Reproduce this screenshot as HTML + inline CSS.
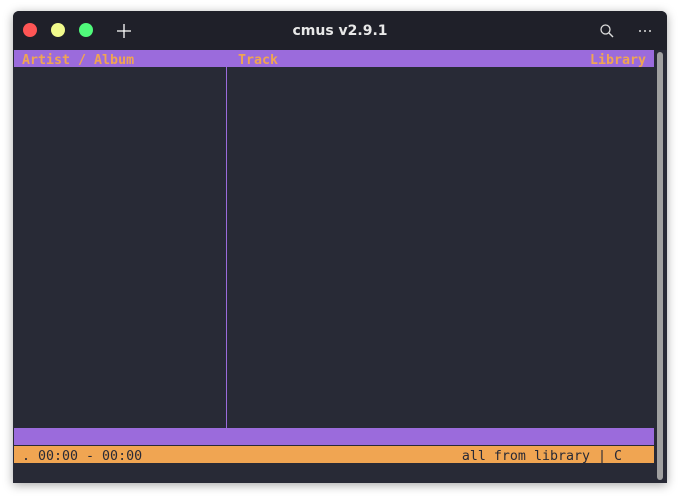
<!DOCTYPE html>
<html><head><style>
body{margin:0;width:680px;height:498px;background:#fff;position:relative;overflow:hidden;font-family:"DejaVu Sans Mono","Liberation Mono",monospace}
.win{position:absolute;left:13px;top:11px;width:654px;height:472px;background:#282a36;border-radius:6px 6px 0 0;box-shadow:0 2px 10px rgba(0,0,0,.35);overflow:hidden}
.tb{position:absolute;left:0;top:0;width:654px;height:39px;background:#1f2029}
.dot{position:absolute;top:12px;width:14px;height:14px;border-radius:50%}
.title{position:absolute;left:0;width:654px;top:12px;text-align:center;color:#e8e8e8;font:bold 14px "DejaVu Sans","Liberation Sans",sans-serif}
.bar{position:absolute;left:1px;width:640px;height:17px;font-size:13.3px;line-height:17px;white-space:pre}
.bar span{top:2px}
</style></head><body>
<div class="win">
<div class="tb">
<div class="dot" style="left:10px;background:#ff5555"></div>
<div class="dot" style="left:38px;background:#f1fa8c"></div>
<div class="dot" style="left:66px;background:#50fa7b"></div>
<svg style="position:absolute;left:104px;top:13px" width="14" height="14"><path d="M7 0V14M0 7H14" stroke="#fff" stroke-width="1.3"/></svg>
<div class="title">cmus v2.9.1</div>
<svg style="position:absolute;left:587px;top:13px" width="14" height="14"><circle cx="5.5" cy="5.5" r="4.5" fill="none" stroke="#ddd" stroke-width="1.3"/><path d="M9 9L13 13" stroke="#ddd" stroke-width="1.4"/></svg>
<svg style="position:absolute;left:625px;top:18px" width="14" height="4"><circle cx="2" cy="2" r="1" fill="#ddd"/><circle cx="7" cy="2" r="1" fill="#ddd"/><circle cx="12" cy="2" r="1" fill="#ddd"/></svg>
</div>
<div class="bar" style="top:39px;background:#9b6bdc;color:#f0a552;font-weight:bold"><span style="position:absolute;left:8px">Artist / Album</span><span style="position:absolute;left:224px">Track</span><span style="position:absolute;right:8px">Library</span></div>
<div style="position:absolute;left:213px;top:56px;width:1px;height:361px;background:#9b6bdc"></div>
<div class="bar" style="top:417px;background:#9b6bdc"></div>
<div class="bar" style="top:435px;background:#f0a552;color:#282a36"><span style="position:absolute;left:8px">. 00:00 - 00:00</span><span style="position:absolute;right:32px">all from library | C</span></div>
<div style="position:absolute;left:644px;top:41px;width:6px;height:428px;background:#a0a0a0;border-radius:3px"></div>
</div>
</body></html>
